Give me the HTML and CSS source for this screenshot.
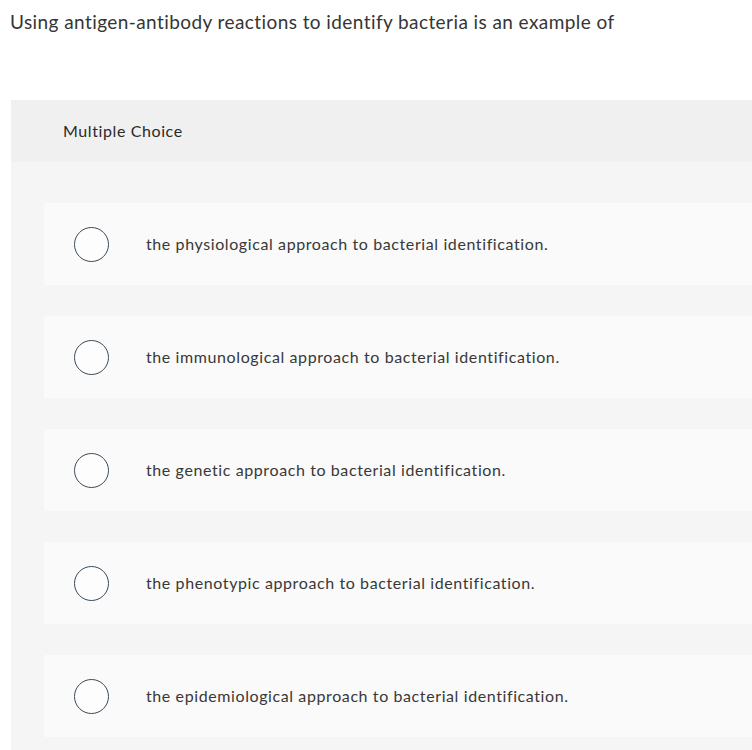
FILE: index.html
```html
<!DOCTYPE html>
<html lang="en">
<head>
<meta charset="utf-8">
<title>Question</title>
<link rel="stylesheet" href="styles.css">
</head>
<body>
<div class="page">
  <p class="prompt">Using antigen-antibody reactions to identify bacteria is an example of</p>
  <section class="panel">
    <header class="panel-head">Multiple Choice</header>
    <ul class="choices">
      <li class="choice"><span class="radio"></span><span class="label">the physiological approach to bacterial identification.</span></li>
      <li class="choice"><span class="radio"></span><span class="label">the immunological approach to bacterial identification.</span></li>
      <li class="choice"><span class="radio"></span><span class="label">the genetic approach to bacterial identification.</span></li>
      <li class="choice"><span class="radio"></span><span class="label">the phenotypic approach to bacterial identification.</span></li>
      <li class="choice"><span class="radio"></span><span class="label">the epidemiological approach to bacterial identification.</span></li>
    </ul>
  </section>
</div>
</body>
</html>
```
FILE: styles.css
```css
html, body {
  margin: 0;
  padding: 0;
  background: #ffffff;
  height: 100%;
}

body {
  font-family: Lato, "Open Sans", "Liberation Sans", sans-serif;
  font-variant-ligatures: none;
  color: #333;
  overflow: hidden;
}

.page {
  padding-left: 11px;
  height: 100%;
  box-sizing: border-box;
  display: flex;
  flex-direction: column;
}

.prompt {
  margin: 0 0 0 -1px;
  padding-top: 10px;
  font-size: 19px;
  line-height: 24px;
  letter-spacing: 0.42px;
  color: #353535;
}

.panel {
  margin-top: 66px;
  flex: 1;
  background: #f5f5f5;
  overflow: hidden;
}

.panel-head {
  height: 62px;
  box-sizing: border-box;
  padding: 20px 0 0 52px;
  background: #f0f0f0;
  font-size: 16px;
  line-height: 22px;
  letter-spacing: 0.6px;
  color: #2a2a2a;
}

.choices {
  list-style: none;
  margin: 0;
  padding: 41px 0 0 33px;
  display: flex;
  flex-direction: column;
  gap: 31px;
}

.choice {
  flex: none;
  display: flex;
  align-items: center;
  height: 82px;
  background: #fafafa;
  padding-left: 30px;
}

.radio {
  flex: none;
  width: 33px;
  height: 33px;
  border: 1.5px solid #3b4a5a;
  border-radius: 50%;
  background: #fdfdfd;
}

.label {
  margin-left: 37px;
  font-size: 16px;
  line-height: 22px;
  letter-spacing: 0.6px;
  color: #383838;
}
```
